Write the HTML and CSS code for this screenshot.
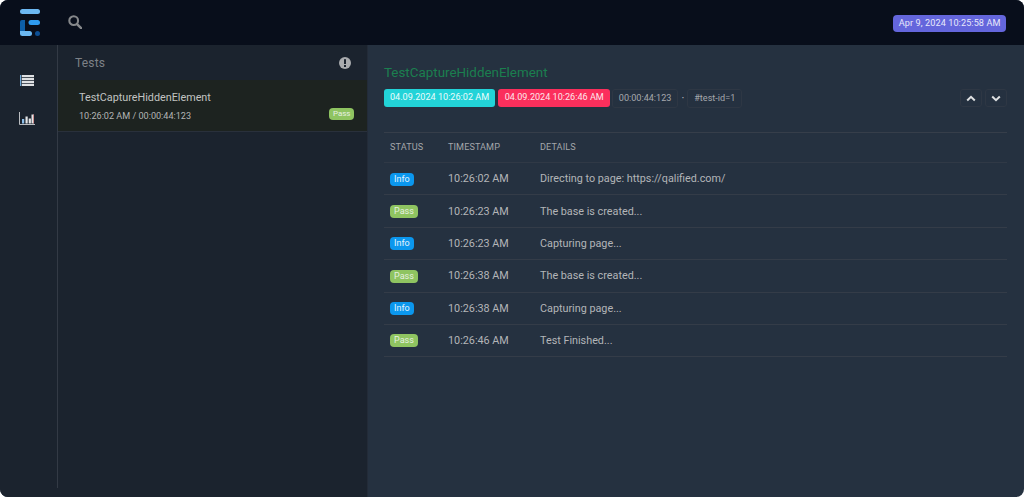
FILE: index.html
```html
<!DOCTYPE html>
<html lang="en">
<head>
<meta charset="utf-8">
<title>Test Report</title>
<link rel="stylesheet" href="styles.css">
</head>
<body>
<div class="app">
  <header class="topbar">
    <svg class="logo" viewBox="0 0 20 27" width="20" height="27">
      <rect x="0" y="0" width="20" height="5" rx="2.5" fill="#6cb8f2"/>
      <path d="M2 11h3v11H0v-9a2 2 0 0 1 2-2z" fill="#0d5fa8"/>
      <rect x="8.500" y="11" width="11.500" height="5" rx="2.500" fill="#2f9bf0"/>
      <path d="M0 22h9.500a2.500 2.500 0 0 1 0 5H2.500A2.500 2.500 0 0 1 0 24.500z" fill="#6cb8f2"/>
      <circle cx="17.500" cy="24.500" r="2.500" fill="#0d4f94"/>
    </svg>
    <svg class="search" viewBox="0 0 16 16" width="14" height="14">
      <circle cx="6.500" cy="6.500" r="5" fill="none" stroke="#85878a" stroke-width="2.400"/>
      <path d="M10.300 10.300 15 15" stroke="#85878a" stroke-width="2.800" stroke-linecap="round"/>
    </svg>
    <span class="date-badge">Apr 9, 2024 10:25:58 AM</span>
  </header>
  <div class="body">
    <nav class="side">
      <svg class="nav-icon" viewBox="0 0 14 11" width="14" height="11">
        <rect x="0" y="0" width="1.200" height="11" fill="#6fa8d8"/>
        <rect x="1.800" y="0" width="12.200" height="2.200" fill="#dfe1e4"/>
        <rect x="1.800" y="2.950" width="12.200" height="2.200" fill="#dfe1e4"/>
        <rect x="1.800" y="5.900" width="12.200" height="2.200" fill="#dfe1e4"/>
        <rect x="1.800" y="8.800" width="12.200" height="2.200" fill="#dfe1e4"/>
      </svg>
      <svg class="nav-icon" viewBox="0 0 16 13" width="16" height="13">
        <path d="M.5 0v12.500H16" fill="none" stroke="#b9bcc0" stroke-width="1"/>
        <rect x="3" y="7" width="2.200" height="4.500" fill="#8fc0ea"/>
        <rect x="6.500" y="4.500" width="2.200" height="7" fill="#e4e6e8"/>
        <rect x="9.700" y="6.500" width="2.200" height="5" fill="#e4e6e8"/>
        <rect x="12.500" y="2.500" width="2.200" height="9" fill="#e4e6e8"/>
        <rect x="14.200" y="2.500" width=".8" height="9" fill="#d98a8a"/>
      </svg>
    </nav>
    <aside class="list">
      <div class="list-head">
        <span>Tests</span>
        <svg viewBox="0 0 12 12" width="12" height="12">
          <circle cx="6" cy="6" r="6" fill="#a9abae"/>
          <rect x="5" y="2.200" width="2" height="4.800" fill="#1b232e"/>
          <rect x="5" y="8" width="2" height="2" fill="#1b232e"/>
        </svg>
      </div>
      <div class="test-item">
        <div class="test-name">TestCaptureHiddenElement</div>
        <div class="test-meta">
          <span>10:26:02 AM / 00:00:44:123</span>
          <span class="tag tag-pass tag-small">Pass</span>
        </div>
      </div>
    </aside>
    <main class="detail">
      <h1 class="title">TestCaptureHiddenElement</h1>
      <div class="badges">
        <span class="pill pill-start">04.09.2024 10:26:02 AM</span>
        <span class="pill pill-end">04.09.2024 10:26:46 AM</span>
        <span class="pill pill-outline">00:00:44:123</span>
        <span class="dot">·</span>
        <span class="pill pill-outline">#test-id=1</span>
        <span class="arrows">
          <span class="arrow"><svg viewBox="0 0 10 7" width="10" height="7"><path d="M1.200 5.500 5 1.800l3.800 3.700" fill="none" stroke="#dfe1e3" stroke-width="2"/></svg></span>
          <span class="arrow"><svg viewBox="0 0 10 7" width="10" height="7"><path d="M1.200 1.500 5 5.200l3.800-3.700" fill="none" stroke="#dfe1e3" stroke-width="2"/></svg></span>
        </span>
      </div>
      <table class="log">
        <thead>
          <tr><th class="c1">STATUS</th><th class="c2">TIMESTAMP</th><th>DETAILS</th></tr>
        </thead>
        <tbody>
          <tr><td><span class="tag tag-info">Info</span></td><td>10:26:02 AM</td><td>Directing to page: https://qalified.com/</td></tr>
          <tr><td><span class="tag tag-pass">Pass</span></td><td>10:26:23 AM</td><td>The base is created...</td></tr>
          <tr><td><span class="tag tag-info">Info</span></td><td>10:26:23 AM</td><td>Capturing page...</td></tr>
          <tr><td><span class="tag tag-pass">Pass</span></td><td>10:26:38 AM</td><td>The base is created...</td></tr>
          <tr><td><span class="tag tag-info">Info</span></td><td>10:26:38 AM</td><td>Capturing page...</td></tr>
          <tr><td><span class="tag tag-pass">Pass</span></td><td>10:26:46 AM</td><td>Test Finished...</td></tr>
        </tbody>
      </table>
    </main>
  </div>
</div>
</body>
</html>
```
FILE: styles.css
```css
* { box-sizing: border-box; }
html, body { margin: 0; height: 100%; background: #fff; overflow: hidden; }
body { font-family: Roboto, "Liberation Sans", sans-serif; font-size: 11px; color: #b9bbbe; }
.app { height: 497px; width: 1024px; border-radius: 8px; overflow: hidden; display: flex; flex-direction: column; background: #253140; }
.topbar { height: 45px; flex: none; background: #080e1b; display: flex; align-items: center; padding: 0 18px 0 20px; }
.logo { margin-top: -1px; }
.search { margin-left: 28px; margin-top: -1px; }
.date-badge { margin-left: auto; margin-top: 2px; background: #6466dc; color: #e8e9fb; font-size: 9.100px; line-height: 17px; padding: 0 5.500px; border-radius: 4px; letter-spacing: .1px; }
.body { flex: 1; display: flex; min-height: 0; }
.side { width: 58px; flex: none; background: #1b232e; position: relative; display: flex; flex-direction: column; align-items: center; padding: 30px 4px 0 0; gap: 26px; }
.side::after { content: ""; position: absolute; right: 0; top: 0; bottom: 9px; width: 1px; background: #333a45; }
.list { width: 310px; flex: none; background: #1b232e; border-right: 1px solid #232b38; }
.list-head { height: 35px; display: flex; align-items: center; justify-content: space-between; padding: 0 16px 0 17px; font-size: 12px; color: #7d8187; letter-spacing: .2px; }
.test-item { height: 52px; background: #1d2320; border-bottom: 1px solid #29303b; padding: 11px 13px 0 21px; }
.test-name { font-size: 10.800px; line-height: 14px; color: #c2c3c2; }
.test-meta { display: flex; justify-content: space-between; align-items: flex-start; margin-top: 5px; font-size: 9.100px; line-height: 13px; color: #b3b5b5; }
.test-meta .tag { margin-top: -2px; }
.tag { display: inline-block; font-size: 9px; line-height: 13px; padding: 0 4px; border-radius: 4px; color: #e6f0e0; }
.tag-small { font-size: 8px; line-height: 12px; padding: 0 3.500px; }
.tag-pass { background: #8fc461; }
.tag-info { background: #0b97ee; color: #e4f3fd; }
.detail { flex: 1; min-width: 0; padding: 19px 17px 0 16px; }
.title { margin: 0; font-weight: 400; font-size: 13.400px; line-height: 17px; color: #1b7f4f; }
.badges { display: flex; align-items: center; margin-top: 8px; height: 18px; gap: 3px; }
.pill { font-size: 9.100px; line-height: 17px; padding: 0 6px; border-radius: 3px; height: 18px; display: inline-block; white-space: nowrap; }
.pill-start { background: #22d3d8; color: #eafcfc; }
.pill-end { background: #fb2f5c; color: #fde6eb; padding: 0 6.500px; margin-right: -1.500px; }
.pill-outline { border: 1px solid #2e3744; color: #a5a8ad; line-height: 16px; height: 19px; }
.dot { color: #c0c2c6; }
.arrows { margin-left: auto; display: flex; gap: 3px; }
.arrow { width: 22px; height: 18px; border: 1px solid #2e3744; border-radius: 3px; display: flex; align-items: center; justify-content: center; }
.log { width: 100%; border-collapse: collapse; margin-top: 25px; table-layout: fixed; }
.log th { text-align: left; font-weight: 400; font-size: 9.100px; color: #a3a6aa; height: 30px; padding: 0 6px 2px; border-top: 1px solid #363e4a; border-bottom: 1px solid #303946; letter-spacing: .1px; }
.log .c1 { width: 58px; }
.log .c2 { width: 92px; }
.log td { height: 32.400px; padding: 0 6px; font-size: 10.800px; color: #b3b5b8; border-bottom: 1px solid #343c48; }
.log td .tag { vertical-align: middle; margin-bottom: 0; }
```
